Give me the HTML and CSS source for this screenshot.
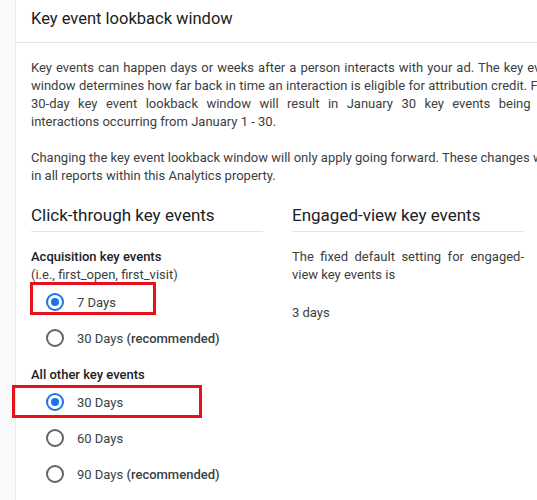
FILE: index.html
```html
<!DOCTYPE html>
<html>
<head>
<meta charset="utf-8">
<link rel="stylesheet" href="styles.css">
</head>
<body>
<div class="page">
  <div class="rail"></div>
  <div class="panel">
    <div class="header">Key event lookback window</div>
    <div class="content">
      <p class="para"><span class="para-main">Key events can happen days or weeks after a person interacts with your ad. The key event lookback window determines how far back in time an interaction is eligible for attribution credit. For example, a 30-day key event lookback window will result in January 30 key events being attributed to</span> <span class="para-end">interactions occurring from January 1 - 30.</span></p>
      <p class="para para2">Changing the key event lookback window will only apply going forward. These changes will be reflected in all reports within this Analytics property.</p>
      <div class="cols">
        <div class="col">
          <h2 class="sec">Click-through key events</h2>
          <div class="group-title">Acquisition key events</div>
          <div class="group-sub">(i.e., first_open, first_visit)</div>
          <div class="row hl hl-a"><span class="radio on"></span><span class="lbl">7 Days</span></div>
          <div class="row"><span class="radio"></span><span class="lbl">30 Days <b>(recommended)</b></span></div>
          <div class="group-title group-2">All other key events</div>
          <div class="row hl hl-b"><span class="radio on"></span><span class="lbl">30 Days</span></div>
          <div class="row"><span class="radio"></span><span class="lbl">60 Days</span></div>
          <div class="row"><span class="radio"></span><span class="lbl">90 Days <b>(recommended)</b></span></div>
        </div>
        <div class="col">
          <h2 class="sec">Engaged-view key events</h2>
          <p class="just">The fixed default setting for engaged-view key events is</p>
          <p class="days">3 days</p>
        </div>
      </div>
    </div>
  </div>
</div>
</body>
</html>
```
FILE: styles.css
```css
html, body {
  margin: 0;
  padding: 0;
  background: #ffffff;
  overflow: hidden;
  width: 537px;
  height: 500px;
}
body {
  font-family: Roboto, "Noto Sans", Arial, sans-serif;
  color: #3c4043;
}
.page {
  display: flex;
  width: 700px;
  min-height: 500px;
}
.rail {
  width: 15px;
  flex: none;
  background: #f8f9fa;
  border-right: 1px solid #e8eaed;
}
.panel {
  flex: 1;
}
.header {
  height: 43px;
  line-height: 38px;
  padding-left: 15px;
  font-size: 16.5px;
  color: #202124;
  border-bottom: 1px solid #e3e3e3;
  box-sizing: border-box;
}
.content {
  padding-left: 15px;
}
.para {
  margin: 16px 0 0;
  width: 584px;
  font-size: 13px;
  line-height: 18px;
  text-align: justify;
}
.para-main {
  display: block;
  text-align: justify;
  text-align-last: justify;
}
.para-end {
  display: block;
}
.para2 {
  margin-top: 18px;
  width: 600px;
  text-align: left;
}
.cols {
  display: flex;
  gap: 29px;
  margin-top: 18px;
}
.col {
  width: 232px;
  flex: none;
}
.sec {
  margin: 0;
  font-weight: 400;
  font-size: 17px;
  line-height: 24px;
  padding-bottom: 4px;
  color: #202124;
  border-bottom: 1px solid #e3e3e3;
}
.group-title {
  margin-top: 16px;
  font-size: 13px;
  line-height: 18px;
  font-weight: 500;
  color: #202124;
}
.group-2 {
  margin-top: 10px;
}
.group-sub {
  font-size: 13px;
  line-height: 18px;
}
.row {
  display: flex;
  align-items: center;
  height: 36px;
  padding-left: 15px;
  font-size: 13px;
}
.row b {
  font-weight: 500;
  color: #3c4043;
}
.radio {
  width: 18px;
  height: 18px;
  box-sizing: border-box;
  border: 2px solid #5f6368;
  border-radius: 50%;
  margin-right: 13px;
  display: flex;
  align-items: center;
  justify-content: center;
  flex: none;
}
.radio.on {
  border-color: #1a73e8;
}
.radio.on::after {
  content: "";
  width: 8px;
  height: 8px;
  border-radius: 50%;
  background: #1a73e8;
}
.hl {
  position: relative;
}
.hl::before {
  content: "";
  position: absolute;
  border: 3px solid #e8111b;
  box-sizing: border-box;
}
.hl-a::before {
  left: -1px;
  top: -2px;
  width: 126px;
  height: 33px;
}
.hl-b::before {
  left: -19px;
  top: 1px;
  width: 190px;
  height: 33px;
}
.just {
  margin: 16px 0 0;
  font-size: 13px;
  line-height: 18px;
  text-align: justify;
}
.days {
  margin: 20px 0 0;
  font-size: 13px;
  line-height: 18px;
}
```
